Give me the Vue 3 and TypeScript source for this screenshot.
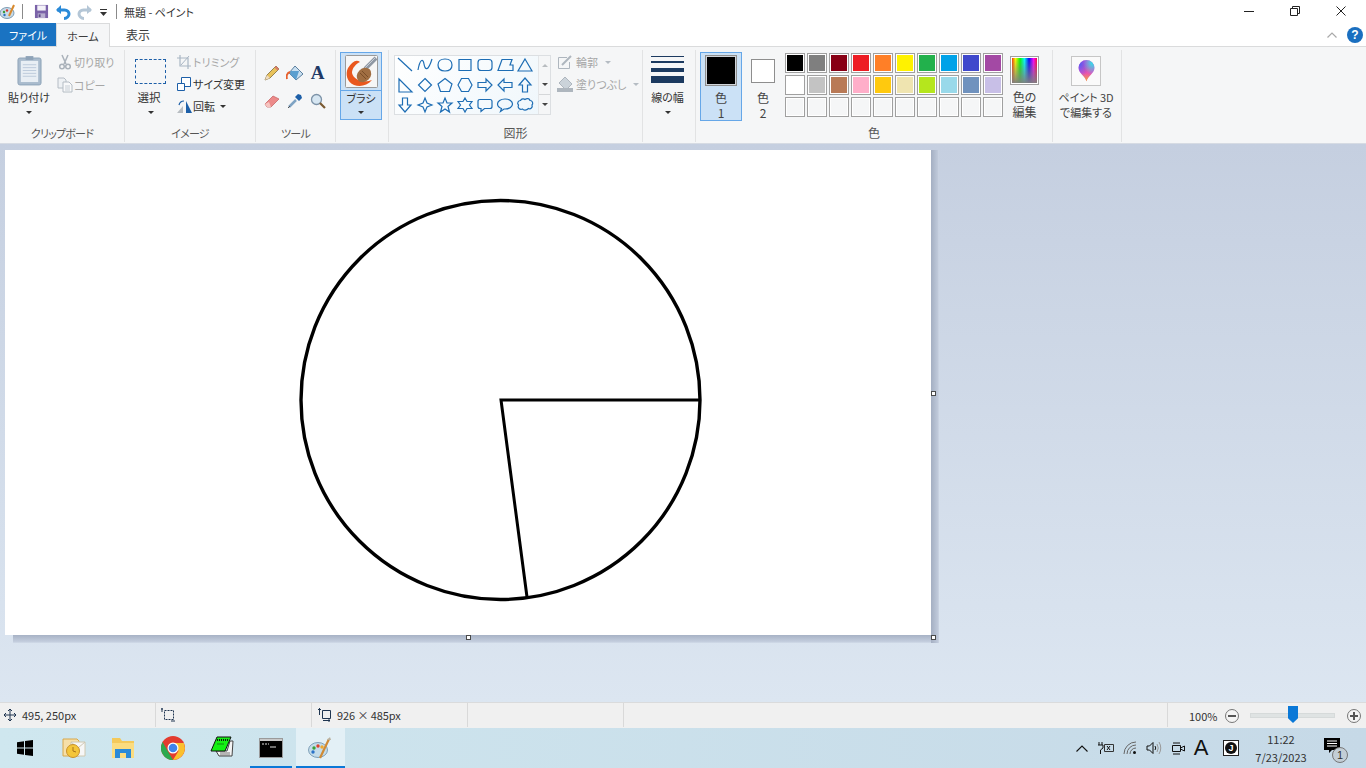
<script setup lang="ts">
// shapes gallery, row by row
const shapes: string[] = [
  'M3 3L17 16',
  'M3 15C5 4 8 3 9 9S13 17 17 4',
  'M3 10C3 6 6 4 10 4S17 6 17 10 14 16 10 16 3 14 3 10Z',
  'M4 4.500H16V15.500H4Z',
  'M6 4.500H14Q17 4.500 17 7.500V12.500Q17 15.500 14 15.500H6Q3 15.500 3 12.500V7.500Q3 4.500 6 4.500Z',
  'M7 4.500H17L15 10H18V15.500H3Z',
  'M10 4L17 16H3Z',
  'M4 4L17 17H4Z',
  'M10 3.500L16.500 10 10 16.500 3.500 10Z',
  'M10 3.500L17 9 14.500 16.500H5.500L3 9Z',
  'M6.500 3.500H13.500L17 10 13.500 16.500H6.500L3 10Z',
  'M3 7.500H11V4L17 10 11 16V12.500H3Z',
  'M17 7.500H9V4L3 10 9 16V12.500H17Z',
  'M7.500 17V10H4L10 3 16 10H12.500V17Z',
  'M7.500 3V10H4L10 17 16 10H12.500V3Z',
  'M10 3L12 8 17 10 12 12 10 17 8 12 3 10 8 8Z',
  'M10 3L12 8H17L13 11.500 14.500 17 10 14 5.500 17 7 11.500 3 8H8Z',
  'M10 3L12 6.500H17L14.500 10 17 13.500H12L10 17 8 13.500H3L5.500 10 3 6.500H8Z',
  'M5 4.500H15Q17 4.500 17 6.500V11.500Q17 13.500 15 13.500H9.500L6 16.500V13.500H5Q3 13.500 3 11.500V6.500Q3 4.500 5 4.500Z',
  'M10 4C14.500 4 17.500 6.500 17.500 9S14.500 14 10 14H9L5.500 16.500 6.500 13.500C4 12.500 2.500 11 2.500 9 2.500 6.500 5.500 4 10 4Z',
  'M5.500 5.500C6.500 3.500 9 3.500 10 4.500 12 3 14.500 3.500 15 5.500 17.500 5.500 18.500 8.500 17 10 18 12.500 15.500 14.500 13.500 13.500 11.500 15.500 8.500 15.500 7.500 14 5 15 2 13 3.500 10 1.500 8 3.500 5.500 5.500 5.500Z',
]

const colorRows: string[][] = [
  ['#000000', '#7f7f7f', '#880015', '#ed1c24', '#ff7f27', '#fff200', '#22b14c', '#00a2e8', '#3f48cc', '#a349a4'],
  ['#ffffff', '#c3c3c3', '#b97a57', '#ffaec9', '#ffc90e', '#efe4b0', '#b5e61d', '#99d9ea', '#7092be', '#c8bfe7'],
  Array(10).fill(''),
]

const statusCells = [
  { cls: 'cell-pos', text: '495, 250px', icon: 'pos' },
  { cls: 'cell-sel', text: '', icon: 'sel' },
  { cls: 'cell-size', text: '926 × 485px', icon: 'size' },
  { cls: 'cell-blank', text: '', icon: '' },
  { cls: 'cell-rest', text: '', icon: '' },
]
</script>

<template>
  <div class="paint">
    <!-- title bar -->
    <header class="titlebar">
      <svg class="qa-app" viewBox="0 0 16 16" width="16" height="16">
        <ellipse cx="7" cy="9" rx="7" ry="5.500" fill="#c7dbe8" stroke="#7f9db5" />
        <circle cx="4" cy="8" r="1.200" fill="#3a9a3a" />
        <circle cx="7" cy="6.500" r="1.200" fill="#d8352a" />
        <circle cx="4.500" cy="11" r="1.200" fill="#2a6fc0" />
        <path d="M9 12L14 1" stroke="#d88a2e" stroke-width="2" />
      </svg>
      <i class="qa-sep"></i>
      <svg class="qa-save" viewBox="0 0 16 16" width="15" height="15">
        <path d="M1 1H15V15H1Z" fill="#7a62a8" />
        <path d="M3.500 1.500H12.500V7H3.500Z" fill="#f3f1f8" />
        <path d="M4 10H12V15H4Z" fill="#b7afcf" />
        <path d="M5 11H7V14H5Z" fill="#5c4a88" />
      </svg>
      <svg class="qa-undo" viewBox="0 0 16 16" width="16" height="16">
        <path d="M2 6H9.500C12.500 6 14 8 14 10S12 14.500 9 14.500" fill="none" stroke="#2a8ad8" stroke-width="3" />
        <path d="M6 1V10L1 6Z" fill="#2a8ad8" />
      </svg>
      <svg class="qa-redo" viewBox="0 0 16 16" width="16" height="16">
        <path d="M14 6H6.500C3.500 6 2 8 2 10S4 14.500 7 14.500" fill="none" stroke="#b4c6d6" stroke-width="3" />
        <path d="M10 1V10L15 6Z" fill="#b4c6d6" />
      </svg>
      <svg class="qa-drop" viewBox="0 0 8 8" width="8" height="8">
        <path d="M0 1H7V2H0ZM0 4H7L3.500 8Z" fill="#333" />
      </svg>
      <i class="qa-sep second"></i>
      <span class="title-text">無題 - ペイント</span>
      <div class="win-controls">
        <svg viewBox="0 0 10 10" width="10" height="10"><path d="M0 5.500H10" stroke="#222" /></svg>
        <svg viewBox="0 0 10 10" width="10" height="10"><path d="M.5 2.500H7.500V9.500H.5ZM2.500 2.500V.5H9.500V7.500H7.500" fill="none" stroke="#222" /></svg>
        <svg viewBox="0 0 10 10" width="10" height="10"><path d="M.5 .5L9.500 9.500M9.500 .5L.5 9.500" stroke="#222" /></svg>
      </div>
    </header>

    <!-- tabs -->
    <nav class="tabs">
      <span class="tab file">ファイル</span>
      <span class="tab home">ホーム</span>
      <span class="tab view">表示</span>
      <div class="tabs-right">
        <svg viewBox="0 0 10 6" width="10" height="6"><path d="M.5 5.500L5 1 9.500 5.500" fill="none" stroke="#a9a9a9" stroke-width="1.200" /></svg>
        <span class="help">?</span>
      </div>
    </nav>

    <!-- ribbon -->
    <section class="ribbon">
      <div class="group g-clip">
        <div class="group-body">
          <div class="big-btn paste">
            <svg viewBox="0 0 26 32" width="25" height="31">
              <rect x="1" y="3" width="24" height="28" rx="2" fill="#a9bbcd" stroke="#8ea3b8" />
              <rect x="4" y="6" width="18" height="22" fill="#e8eef4" />
              <path d="M6 10H20M6 13H20M6 16H20M6 19H20M6 22H20" stroke="#bccadb" />
              <rect x="9" y="1" width="8" height="4" fill="#8ea3b8" />
            </svg>
            <span class="big-label">貼り付け</span>
            <i class="caret"></i>
          </div>
          <div class="small-col clip-col">
            <div class="small-row off">
              <svg viewBox="0 0 16 16" width="16" height="16"><path d="M5 1L9 10M11 1L7 10" stroke="#aab2ba" stroke-width="1.500" /><circle cx="5" cy="12.500" r="2.300" fill="none" stroke="#aab2ba" stroke-width="1.500" /><circle cx="11" cy="12.500" r="2.300" fill="none" stroke="#aab2ba" stroke-width="1.500" /></svg>
              <span>切り取り</span>
            </div>
            <div class="small-row off">
              <svg viewBox="0 0 16 16" width="16" height="16"><path d="M1 1H7L9 3V11H1Z" fill="#eef1f4" stroke="#b4bcc4" /><path d="M6 5H12L15 8V15H6Z" fill="#f8f9fa" stroke="#b4bcc4" /><path d="M8 9H13M8 11H13M8 13H13" stroke="#c6cdd4" /></svg>
              <span>コピー</span>
            </div>
          </div>
        </div>
        <div class="group-label">クリップボード</div>
      </div>

      <div class="group g-image">
        <div class="group-body">
          <div class="big-btn select">
            <i class="dash-box"></i>
            <span class="big-label">選択</span>
            <i class="caret"></i>
          </div>
          <div class="small-col tight">
            <div class="small-row off">
              <svg viewBox="0 0 16 16" width="16" height="16"><path d="M4 1V12H15M1 4H12V15" fill="none" stroke="#a9b6c4" stroke-width="1.200" /><path d="M5 11L13 2" stroke="#a9b6c4" /></svg>
              <span>トリミング</span>
            </div>
            <div class="small-row">
              <svg viewBox="0 0 16 16" width="16" height="16"><path d="M5.500 1.500H14.500V10.500H5.500Z" fill="#fff" stroke="#1d5fa8" /><path d="M1.500 7.500H8.500V14.500H1.500Z" fill="#fff" stroke="#1d5fa8" /></svg>
              <span>サイズ変更</span>
            </div>
            <div class="small-row">
              <svg viewBox="0 0 16 16" width="16" height="16"><path d="M1 15L7 8V15Z" fill="#b8bdc2" /><path d="M10 3V15H16Z" fill="#1d5fa8" /><path d="M3 7Q4 3 8 3" fill="none" stroke="#1d5fa8" stroke-width="1.200" /></svg>
              <span>回転</span>
              <i class="caret inline"></i>
            </div>
          </div>
        </div>
        <div class="group-label">イメージ</div>
      </div>

      <div class="group g-tools">
        <div class="group-body tool-grid">
          <svg viewBox="0 0 16 16" width="16" height="16"><path d="M1 15L3 10 12 1 15 4 6 13Z" fill="#e8c25a" stroke="#7d6b3a" stroke-width=".8" /><path d="M1 15L3 10 6 13Z" fill="#f0dcc0" /><path d="M12 1L15 4 13.500 5.500 10.500 2.500Z" fill="#d87a6a" /></svg>
          <svg viewBox="0 0 18 16" width="18" height="16"><path d="M9 1L17 9 10 15 3 8Z" fill="#c9dff0" stroke="#5a7f9f" /><path d="M5 6L13 6 10 15 3 8Z" fill="#5a9fd0" /><path d="M4 7C1 8 0 11 1 14" fill="none" stroke="#e8602c" stroke-width="2" /></svg>
          <span class="tool-a">A</span>
          <svg viewBox="0 0 16 16" width="16" height="16"><path d="M1 11L9 3 15 6 7 14 3 14Z" fill="#ec8a8a" stroke="#c86a6a" stroke-width=".8" /><path d="M1 11L3 14 7 14 5 9Z" fill="#f6c4c0" /></svg>
          <svg viewBox="0 0 16 16" width="16" height="16"><path d="M2 14L9 7" stroke="#7fa4c4" stroke-width="2.500" /><path d="M8 4L12 8 15 5 14 2 11 1Z" fill="#1d5fa8" /><path d="M1 15L3 13" stroke="#555" /></svg>
          <svg viewBox="0 0 16 16" width="16" height="16"><circle cx="6.500" cy="6.500" r="5" fill="#d6e6f2" stroke="#7d93a8" stroke-width="1.300" /><path d="M10 10L15 15" stroke="#7a5a32" stroke-width="2.200" /></svg>
        </div>
        <div class="group-label">ツール</div>
      </div>

      <div class="group g-brush">
        <div class="group-body">
          <div class="brush-btn">
            <div class="brush-top">
              <svg viewBox="0 0 33 33" width="33" height="33">
                <rect x=".5" y=".5" width="32" height="32" rx="1" fill="#f6f6f6" stroke="#9a9a9a" />
                <path d="M31 3L20 14" stroke="#8f98a4" stroke-width="4" />
                <path d="M30 3L20 13" stroke="#c9ced6" />
                <path d="M15 7C11 4 7 7 3 13 0 19 2 27 9 30 15 32 22 31 27 25 20 28 9 26 7 18 7 13 11 9 15 7Z" fill="#e9571d" />
                <ellipse cx="19" cy="20" rx="8" ry="6.500" transform="rotate(-45 19 20)" fill="#a06e42" />
                <path d="M15 18L21 24M17 16L23 22" stroke="#7a4e28" />
              </svg>
            </div>
            <span class="brush-label">ブラシ</span>
            <i class="caret"></i>
          </div>
        </div>
      </div>

      <div class="group g-shapes">
        <div class="group-body">
          <div class="gallery">
            <div class="gallery-items">
              <svg v-for="(d, i) in shapes" :key="i" viewBox="0 0 20 20" width="20" height="20">
                <path :d="d" fill="none" stroke="#1d6db4" stroke-width="1.200" />
              </svg>
            </div>
            <div class="gallery-arrows">
              <span><i class="arrow up"></i></span>
              <span><i class="arrow"></i></span>
              <span class="more"><i class="arrow"></i></span>
            </div>
          </div>
          <div class="small-col shape-opts">
            <div class="small-row off">
              <svg viewBox="0 0 16 16" width="16" height="16"><path d="M1.500 3.500H10M1.500 3.500V14.500H12.500V8" fill="none" stroke="#aeb6be" /><path d="M5 11L14 2" stroke="#aeb6be" stroke-width="2" /></svg>
              <span>輪郭</span>
              <i class="caret inline light"></i>
            </div>
            <div class="small-row off">
              <svg viewBox="0 0 16 16" width="16" height="16"><path d="M8 1L15 8 9 14 2 7Z" fill="#cbd3da" stroke="#aeb6be" /><path d="M0 12H16V16H0Z" fill="#aeb6be" /></svg>
              <span>塗りつぶし</span>
              <i class="caret inline light"></i>
            </div>
          </div>
        </div>
        <div class="group-label plain">図形</div>
      </div>

      <div class="group g-size">
        <div class="group-body">
          <div class="big-btn size-btn">
            <div class="size-lines">
              <i class="l1"></i><i class="l2"></i><i class="l3"></i><i class="l4"></i>
            </div>
            <span class="big-label">線の幅</span>
            <i class="caret"></i>
          </div>
        </div>
      </div>

      <div class="group g-colors">
        <div class="group-body">
          <div class="color-btn active">
            <i class="chip big"><b></b></i>
            <span>色</span>
            <span>1</span>
          </div>
          <div class="color-btn second">
            <i class="chip"><b class="white"></b></i>
            <span>色</span>
            <span>2</span>
          </div>
          <div class="palette">
            <template v-for="(row, r) in colorRows" :key="r">
              <i v-for="(c, n) in row" :key="n" class="swatch" :style="{ background: c || undefined }"></i>
            </template>
          </div>
          <div class="edit-colors">
            <i class="rainbow"></i>
            <span>色の</span>
            <span>編集</span>
          </div>
        </div>
        <div class="group-label plain">色</div>
      </div>

      <div class="group g-3d">
        <div class="group-body">
          <div class="edit-3d">
            <div class="logo-box">
              <svg viewBox="0 0 24 28" width="19" height="24">
                <defs>
                  <radialGradient id="d3-base" cx=".5" cy=".5" r=".7">
                    <stop offset="0" stop-color="#f04fa8" />
                    <stop offset="1" stop-color="#d84ae0" />
                  </radialGradient>
                  <radialGradient id="d3-left" cx=".1" cy=".2" r=".6">
                    <stop offset="0" stop-color="#5a5cf0" />
                    <stop offset="1" stop-color="#5a5cf0" stop-opacity="0" />
                  </radialGradient>
                  <radialGradient id="d3-right" cx=".85" cy=".15" r=".55">
                    <stop offset="0" stop-color="#30e0e8" />
                    <stop offset="1" stop-color="#30e0e8" stop-opacity="0" />
                  </radialGradient>
                  <linearGradient id="d3-tip" x1="0" y1="0" x2="0" y2="1">
                    <stop offset=".6" stop-color="#f7a02a" stop-opacity="0" />
                    <stop offset="1" stop-color="#f7b02a" />
                  </linearGradient>
                </defs>
                <path d="M12 27C10 20 2 17 2 10A10 10 0 0 1 22 10C22 17 14 20 12 27Z" fill="url(#d3-base)" />
                <path d="M12 27C10 20 2 17 2 10A10 10 0 0 1 22 10C22 17 14 20 12 27Z" fill="url(#d3-left)" />
                <path d="M12 27C10 20 2 17 2 10A10 10 0 0 1 22 10C22 17 14 20 12 27Z" fill="url(#d3-right)" />
                <path d="M12 27C10 20 2 17 2 10A10 10 0 0 1 22 10C22 17 14 20 12 27Z" fill="url(#d3-tip)" />
              </svg>
            </div>
            <span>ペイント 3D</span>
            <span>で編集する</span>
          </div>
        </div>
      </div>
    </section>

    <!-- workspace -->
    <main class="workspace">
      <div class="canvas">
        <svg class="drawing" viewBox="0 0 926 485" width="926" height="485">
          <circle cx="495.500" cy="250" r="199.500" fill="none" stroke="#000" stroke-width="3.400" />
          <path d="M696 250H496L522 447" fill="none" stroke="#000" stroke-width="3" />
        </svg>
        <i class="handle right"></i>
        <i class="handle bottom"></i>
        <i class="handle corner"></i>
      </div>
    </main>

    <!-- status bar -->
    <footer class="statusbar">
      <div v-for="c in statusCells" :key="c.cls" class="status-cell" :class="c.cls">
        <svg v-if="c.icon === 'pos'" viewBox="0 0 12 12" width="12" height="12"><path d="M6 0V12M0 6H12M4 2L6 0 8 2M4 10L6 12 8 10M2 4L0 6 2 8M10 4L12 6 10 8" fill="none" stroke="#1f3550" /></svg>
        <svg v-if="c.icon === 'sel'" viewBox="0 0 14 14" width="14" height="14"><path d="M3.500 2.500H12.500V11.500H3.500Z" fill="none" stroke="#1f3550" stroke-dasharray="2 1" /><path d="M1 0V4M0 1H2M10 13H14" stroke="#1f3550" /></svg>
        <svg v-if="c.icon === 'size'" viewBox="0 0 14 14" width="14" height="14"><path d="M4.500 2.500H12.500V10.500H4.500Z" fill="none" stroke="#1f3550" /><path d="M1.500 0V7M0 1.500H3M5 12.500H12M11 11V14" fill="none" stroke="#1f3550" /></svg>
        <span v-if="c.text">{{ c.text }}</span>
      </div>
      <div class="zoom-area">
        <span class="zoom-val">100%</span>
        <i class="zoom-btn minus"></i>
        <div class="zoom-track"><i class="zoom-thumb"></i></div>
        <i class="zoom-btn plus"></i>
      </div>
    </footer>

    <!-- taskbar -->
    <div class="taskbar">
      <div class="task-item start">
        <svg viewBox="0 0 16 16" width="16" height="16"><path d="M0 2.200L7 1.200V7.500H0ZM8 1L16 0V7.500H8ZM0 8.500H7V14.800L0 13.800ZM8 8.500H16V16L8 15Z" fill="#000" /></svg>
      </div>
      <div class="task-item">
        <svg viewBox="0 0 24 24" width="24" height="24"><path d="M1 3H15L17 5V20H1Z" fill="#f6dfa8" stroke="#d8a84a" /><path d="M9 6H23V20H9Z" fill="#f7f7f7" stroke="#d0c8b0" /><path d="M9 6L16 12 23 6" fill="none" stroke="#cfc8b4" /><circle cx="11" cy="15" r="6.500" fill="#f4c63a" stroke="#c8912a" /><path d="M11 11V15L14 16" fill="none" stroke="#a8741c" /></svg>
      </div>
      <div class="task-item">
        <svg viewBox="0 0 24 22" width="24" height="22"><path d="M1 1H9L11 4H23V21H1Z" fill="#f4c95a" /><path d="M1 6H23V21H1Z" fill="#fbdc7f" /><path d="M4 12H20V21H15V16H9V21H4Z" fill="#2a8ad8" /></svg>
      </div>
      <div class="task-item">
        <svg viewBox="0 0 24 24" width="24" height="24"><circle cx="12" cy="12" r="12" fill="#e33b2e" /><path d="M12 24A12 12 0 0 1 1.600 6L7 15.500 12 24Z" fill="#2da94f" /><path d="M12 24L17.500 15 12 7H22.800A12 12 0 0 1 12 24Z" fill="#fbc02d" /><circle cx="12" cy="12" r="5.500" fill="#fff" /><circle cx="12" cy="12" r="4.300" fill="#3f83ea" /></svg>
      </div>
      <div class="task-item">
        <svg viewBox="0 0 24 24" width="24" height="24"><path d="M6 15L9 20H22L23 5 20 5 17 15Z" fill="#f4f4f4" stroke="#444" /><path d="M7 1H21L15 15H1Z" fill="#14f014" stroke="#111" /><path d="M7 4H18" stroke="#111" stroke-dasharray="1 1" stroke-width="2" /><path d="M7 8H14" stroke="#118811" /><path d="M10 17H20M10 19H20" stroke="#777" /></svg>
      </div>
      <div class="task-item running">
        <svg viewBox="0 0 24 20" width="24" height="20"><rect x=".5" y=".5" width="23" height="19" fill="#000" stroke="#9a9a9a" /><path d="M1 1H23V3H1Z" fill="#c8c8c8" /><path d="M3 6H5M6 6H8M9 6H10M11 9H17" stroke="#ddd" /></svg>
      </div>
      <div class="task-item running current">
        <svg viewBox="0 0 24 24" width="24" height="24"><ellipse cx="10" cy="14" rx="9.500" ry="7.500" fill="#c4dcea" stroke="#7fa0b8" /><circle cx="6" cy="12" r="1.700" fill="#3aa03a" /><circle cx="10" cy="10" r="1.700" fill="#e0402c" /><circle cx="5" cy="16" r="1.700" fill="#2a72c8" /><circle cx="14" cy="11" r="1.700" fill="#f0a82c" /><path d="M12 22L21 3" stroke="#d08a34" stroke-width="2.200" /><path d="M19 4L22 1 23 4Z" fill="#b8b0a0" /></svg>
      </div>

      <div class="tray">
        <svg viewBox="0 0 12 7" width="12" height="7"><path d="M.5 6.500L6 1 11.500 6.500" fill="none" stroke="#111" stroke-width="1.100" /></svg>
        <svg viewBox="0 0 16 12" width="16" height="12"><path d="M6.500 2.500H15.500V9.500H6.500Z" fill="none" stroke="#333" /><path d="M9 4L12 8M12 4L9 8" stroke="#111" /><path d="M1 0V3M4 0V3M0 3H5V6L2.500 8V12" fill="none" stroke="#111" /></svg>
        <svg viewBox="0 0 16 14" width="16" height="14"><path d="M1 13A12 12 0 0 1 13 1M4 13A9 9 0 0 1 13 4M7 13A6 6 0 0 1 13 7" fill="none" stroke="#666" /><circle cx="11.500" cy="11.500" r="1.500" fill="#111" /></svg>
        <svg viewBox="0 0 16 14" width="16" height="14"><path d="M1 5H3.500L7 1.500V12.500L3.500 9H1Z" fill="none" stroke="#111" /><path d="M9 5Q10.500 7 9 9" fill="none" stroke="#111" /><path d="M11 3Q13.500 7 11 11M13 1Q16.500 7 13 13" fill="none" stroke="#999" /></svg>
        <svg viewBox="0 0 14 16" width="14" height="16"><path d="M1.500 5.500H9.500V11.500H1.500Z" fill="none" stroke="#111" /><path d="M9.500 8L13.500 6V11L9.500 9M2 3H9M2 14H9" fill="none" stroke="#111" /></svg>
        <span class="tray-a">A</span>
        <span class="tray-j"><b>J</b></span>
        <div class="clock"><span>11:22</span><span>7/23/2023</span></div>
        <div class="notify">
          <svg viewBox="0 0 16 16" width="16" height="16"><path d="M0 0H16V12H8L5 15V12H0Z" fill="#000" /><path d="M3 3H13M3 5.500H13M3 8H13" stroke="#fff" /></svg>
          <span class="notify-count">1</span>
        </div>
      </div>
    </div>
  </div>
</template>

<style scoped>
.paint {
  width: 1366px;
  height: 768px;
  display: flex;
  flex-direction: column;
  font-family: "Noto Sans CJK JP", "Noto Sans", sans-serif;
  font-feature-settings: "palt";
  font-size: 11px;
  color: #3c3c3c;
  background: #fff;
  overflow: hidden;
}

/* title bar */
.titlebar {
  height: 23px;
  display: flex;
  align-items: center;
  flex: none;
  background: #fff;
}
.qa-app { margin-right: 6px; }
.qa-sep { width: 1px; height: 15px; background: #8a8a8a; margin-right: 11px; }
.qa-sep.second { margin: 0 8px 0 8px; }
.qa-save { margin-right: 6px; }
.qa-undo { margin-right: 6px; }
.qa-redo { margin-right: 7px; }
.title-text { font-size: 11px; color: #333; margin-left: -1px; }
.win-controls {
  margin-left: auto;
  display: flex;
  gap: 36px;
  padding: 0 20px 2px 0;
}

/* tabs */
.tabs {
  height: 23px;
  flex: none;
  display: flex;
  background: #fff;
  position: relative;
}
.tab { display: flex; align-items: center; justify-content: center; font-size: 11px; }
.tab.file { width: 56px; background: #1a73c2; color: #fff; }
.tab.home {
  width: 54px;
  background: #f5f6f7;
  border: 1px solid #dadbdc;
  border-bottom: none;
  height: 24px;
  position: relative;
  z-index: 1;
  box-sizing: border-box;
}
.tab.view { width: 56px; font-size: 12px; }
.tabs-right {
  margin-left: auto;
  display: flex;
  align-items: center;
  gap: 10px;
  padding-right: 3px;
}
.help {
  width: 16px;
  height: 16px;
  border-radius: 50%;
  background: #1a6fc0;
  color: #fff;
  font: bold 12px/16px "Liberation Sans", sans-serif;
  text-align: center;
}

/* ribbon */
.ribbon {
  height: 98px;
  flex: none;
  box-sizing: border-box;
  display: flex;
  background: #f5f6f7;
  border-top: 1px solid #dadbdc;
  border-bottom: 1px solid #d6dbe3;
  padding: 3px 0 1px;
}
.group {
  display: flex;
  flex-direction: column;
  flex: none;
  box-sizing: border-box;
  border-right: 1px solid #e2e3e4;
  position: relative;
}
.group-body { flex: 1; display: flex; min-height: 0; }
.group-label {
  height: 17px;
  line-height: 16px;
  font-size: 11px;
  letter-spacing: -.8px;
  text-align: center;
  color: #555;
  flex: none;
}
.group-label.plain { font-size: 12px; letter-spacing: 0; }
.g-clip { width: 125px; }
.g-image { width: 131px; }
.g-tools { width: 80px; }
.g-brush { width: 53px; }
.g-shapes { width: 254px; }
.g-size { width: 53px; }
.g-colors { width: 357px; }
.g-3d { width: 69px; }

.big-btn { display: flex; flex-direction: column; align-items: center; }
.big-label { font-size: 11px; line-height: 16px; color: #333; white-space: nowrap; }
.caret {
  display: block;
  width: 0;
  height: 0;
  border: 3px solid transparent;
  border-top: 3px solid #333;
  border-bottom: none;
}
.caret.inline { display: inline-block; margin-left: 4px; }
.caret.light { border-top-color: #b5bcc3; }
.big-btn .caret { margin-top: 6px; }

.paste { width: 58px; padding-top: 5px; }
.paste .big-label { margin-top: 3px; }
.select { width: 51px; padding-top: 9px; }
.select .big-label { margin: 5px 3px 0 0; font-size: 11.500px; }
.dash-box {
  display: block;
  width: 29px;
  height: 23px;
  border: 1px dashed #1d5fa8;
}
.small-col { display: flex; flex-direction: column; padding-top: 3px; gap: 5px; }
.small-col.tight { gap: 4px; }
.clip-col { margin-left: -1px; }
.small-row {
  display: flex;
  align-items: center;
  gap: 1px;
  height: 18px;
  white-space: nowrap;
  font-size: 11px;
  color: #333;
}
.small-row.off { color: #a6a6a6; }

/* tools */
.tool-grid {
  display: grid;
  grid-template-columns: repeat(3, 23px);
  grid-auto-rows: 28px;
  justify-items: center;
  align-items: center;
  align-content: start;
  padding: 9px 0 0 4px;
}
.tool-a {
  font: bold 19px/16px "Liberation Serif", serif;
  color: #1f3a66;
}

/* brush */
.g-brush .group-body { padding: 2px 0 0 4px; }
.brush-btn {
  width: 42px;
  height: 68px;
  box-sizing: border-box;
  border: 1px solid #66a7e8;
  background: #cbe1f6;
  display: flex;
  flex-direction: column;
  align-items: center;
}
.brush-top {
  width: 100%;
  height: 37px;
  display: flex;
  align-items: center;
  justify-content: center;
  border-bottom: 1px solid #66a7e8;
  flex: none;
}
.brush-label { line-height: 14px; font-size: 11px; color: #333; }
.brush-btn .caret { margin-top: 6px; }

/* shapes */
.g-shapes .group-body { padding: 5px 0 0 5px; }
.gallery {
  display: flex;
  flex: none;
  width: 157px;
  height: 60px;
  box-sizing: border-box;
  border: 1px solid #dcdfe2;
  background: linear-gradient(135deg, #fff, #eef6fb);
}
.gallery-items {
  display: grid;
  grid-template-columns: repeat(7, 20px);
  grid-auto-rows: 20px;
  width: 143px;
  margin-top: -1px;
  flex: none;
}
.gallery-items svg { display: block; }
.gallery-arrows {
  flex: 1;
  display: flex;
  flex-direction: column;
  border-left: 1px solid #e4e6e8;
  background: #f5f6f7;
}
.gallery-arrows span { flex: 1; display: flex; align-items: center; justify-content: center; }
.gallery-arrows .more { border-top: 1px solid #d5d7d9; }
.arrow {
  width: 0;
  height: 0;
  border: 3px solid transparent;
  border-top: 3px solid #444;
  border-bottom: none;
}
.arrow.up { border-top: none; border-bottom: 3px solid #b8bcc0; }
.shape-opts { padding: 0 0 0 6px; margin-top: -2px; gap: 4px; }
.shape-opts .small-row { gap: 3px; }

/* line width */
.size-btn { width: 49px; padding-top: 6px; }
.size-lines { width: 33px; display: flex; flex-direction: column; }
.size-lines i { display: block; background: #1c3a60; }
.size-lines .l1 { height: 1px; margin-bottom: 4px; }
.size-lines .l2 { height: 2px; margin-bottom: 5px; }
.size-lines .l3 { height: 4px; margin-bottom: 4px; }
.size-lines .l4 { height: 7px; }
.size-btn .big-label { margin-top: 6px; }

/* colours */
.g-colors .group-body { padding: 2px 0 0 4px; }
.color-btn {
  width: 42px;
  height: 69px;
  box-sizing: border-box;
  display: flex;
  flex-direction: column;
  align-items: center;
  font-size: 12px;
  line-height: 15px;
  color: #444;
  border: 1px solid transparent;
}
.color-btn.active { background: #cbe1f6; border-color: #66a7e8; }
.color-btn.second { width: 42px; padding-top: 6px; }
.chip {
  display: block;
  width: 24px;
  height: 24px;
  box-sizing: border-box;
  border: 1px solid #8e8e8e;
  margin-bottom: 7px;
}
.chip.big {
  width: 32px;
  height: 32px;
  padding: 1px;
  margin: 2px 0 4px;
  background: #cfd4da;
}
.chip b { display: block; width: 100%; height: 100%; background: #000; }
.chip b.white { background: #fff; }
.palette {
  display: grid;
  grid-template-columns: repeat(10, 20px);
  grid-auto-rows: 20px;
  gap: 2px;
  margin: 1px 0 0 1px;
  align-content: start;
}
.swatch {
  display: block;
  box-sizing: border-box;
  border: 1px solid #a0a0a0;
  box-shadow: inset 0 0 0 1px #fff;
  background: transparent;
}
.edit-colors {
  display: flex;
  flex-direction: column;
  align-items: center;
  margin-left: 7px;
  width: 29px;
  padding-top: 4px;
  font-size: 12px;
  line-height: 15px;
  color: #444;
  white-space: nowrap;
}
.rainbow {
  display: block;
  width: 29px;
  height: 29px;
  box-sizing: border-box;
  border: 1px solid #a0a0a0;
  box-shadow: inset 0 0 0 1px #fff;
  margin-bottom: 4px;
  background:
    linear-gradient(to bottom, rgba(128, 128, 128, 0), #7f7f7f),
    linear-gradient(to right, #f00, #ff0, #0f0, #0ff, #00f, #f0f, #f00);
}

/* paint 3d */
.edit-3d {
  width: 66px;
  display: flex;
  flex-direction: column;
  align-items: center;
  padding-top: 6px;
  font-size: 11px;
  line-height: 15px;
  color: #444;
  white-space: nowrap;
}
.logo-box {
  width: 30px;
  height: 30px;
  box-sizing: border-box;
  border: 1px solid #c6c6c6;
  background: #fafafa;
  display: flex;
  align-items: center;
  justify-content: center;
  margin-bottom: 4px;
}

/* workspace */
.workspace {
  flex: 1;
  min-height: 0;
  padding: 6px 0 0 5px;
  background: linear-gradient(to bottom, #c5cfe0, #dce6f1);
}
.canvas {
  width: 926px;
  height: 485px;
  background: #fff;
  position: relative;
}
.canvas::before,
.canvas::after {
  content: "";
  position: absolute;
}
.canvas::before {
  left: 100%;
  top: 0;
  width: 8px;
  height: 493px;
  background: linear-gradient(to right, #a4afc2, #bfc9da 85%, #cdd6e5);
}
.canvas::after {
  top: 100%;
  left: 8px;
  width: 918px;
  height: 8px;
  background: linear-gradient(to bottom, #a7b2c5, #c4cede 85%, #d3dcea);
}
.drawing { display: block; }
.handle {
  position: absolute;
  z-index: 1;
  width: 5px;
  height: 5px;
  box-sizing: border-box;
  background: #fff;
  border: 1px solid #4a4a4a;
}
.handle.right { left: 926px; top: 241px; }
.handle.bottom { left: 461px; top: 485px; }
.handle.corner { left: 926px; top: 485px; }

/* status bar */
.statusbar {
  height: 26px;
  flex: none;
  display: flex;
  background: #f0f0f0;
  border-top: 1px solid #dadbdc;
  box-sizing: border-box;
}
.status-cell {
  display: flex;
  align-items: center;
  gap: 6px;
  box-sizing: border-box;
  border-right: 1px solid #d9d9d9;
  padding-left: 4px;
  font-size: 11px;
  color: #333;
  margin: 0 0 1px;
  white-space: nowrap;
}
.cell-pos { width: 156px; }
.cell-sel { width: 156px; padding-left: 5px; }
.cell-size { width: 156px; padding-left: 6px; }
.cell-size span { margin-left: -1px; font-feature-settings: normal; letter-spacing: -.1px; }
.cell-blank { width: 156px; }
.cell-rest { width: 544px; }
.zoom-area {
  flex: 1;
  display: flex;
  align-items: center;
  padding-left: 21px;
  font-size: 11px;
}
.zoom-val { width: 36px; color: #333; }
.zoom-btn {
  display: block;
  position: relative;
  width: 14px;
  height: 14px;
  box-sizing: border-box;
  border: 1px solid #777;
  border-radius: 50%;
  background: #f4f4f4;
}
.zoom-btn::before,
.plus::after {
  content: "";
  position: absolute;
  background: #555;
}
.zoom-btn::before { left: 2px; right: 2px; top: 5px; height: 2px; }
.plus::after { top: 2px; bottom: 2px; left: 5px; width: 2px; }
.zoom-track {
  width: 83px;
  height: 3px;
  background: #dfe3e3;
  border: 1px solid #d6dada;
  margin: 0 12px 0 11px;
  position: relative;
}
.zoom-thumb {
  position: absolute;
  left: 37px;
  top: -8px;
  width: 10px;
  height: 17px;
  background: #0a78d7;
  clip-path: polygon(0 0, 100% 0, 100% 72%, 50% 100%, 0 72%);
}

/* taskbar */
.taskbar {
  height: 40px;
  flex: none;
  display: flex;
  background: linear-gradient(to right, #cfe7ef, #c6d9e7);
}
.task-item {
  width: 49.300px;
  height: 40px;
  flex: none;
  box-sizing: border-box;
  display: flex;
  align-items: center;
  justify-content: center;
  position: relative;
}
.task-item.running::after {
  content: "";
  position: absolute;
  left: 4px;
  right: 4px;
  bottom: 0;
  height: 2px;
  background: #0a78d7;
}
.task-item.current { background: #e3f0f6; }
.task-item.current::after { left: 0; right: 0; }
.tray {
  margin-left: auto;
  display: flex;
  align-items: center;
  padding-right: 24px;
}
/* the tray spacing is uneven in the real thing */
.tray > :nth-child(2) { margin-left: 10px; }
.tray > :nth-child(3) { margin-left: 9px; }
.tray > :nth-child(4) { margin-left: 7px; }
.tray > :nth-child(5) { margin-left: 9px; }
.tray > :nth-child(6) { margin-left: 8px; }
.tray > :nth-child(7) { margin-left: 14px; }
.tray > :nth-child(8) { margin-left: 7px; }
.tray > :nth-child(9) { margin-left: 8px; }
.tray-a { width: 16px; text-align: center; font: 22px/24px "Liberation Sans", sans-serif; color: #111; }
.tray-j {
  width: 16px;
  height: 16px;
  box-sizing: border-box;
  border: 1px solid #222;
  background: #fff;
  display: flex;
  align-items: center;
  justify-content: center;
}
.tray-j b {
  display: block;
  width: 12px;
  height: 12px;
  border-radius: 50%;
  background: #111;
  color: #fff;
  font: bold 9px/12px "Liberation Sans", sans-serif;
  text-align: center;
}
.clock {
  width: 70px;
  display: flex;
  flex-direction: column;
  align-items: center;
  font-size: 11px;
  line-height: 18px;
  color: #333;
}
.notify { position: relative; width: 18px; height: 20px; }
.notify svg { display: block; }
.notify-count {
  position: absolute;
  left: 8px;
  top: 9px;
  width: 16px;
  height: 16px;
  box-sizing: border-box;
  border: 1px solid #777;
  border-radius: 50%;
  background: #c3ced6;
  font: 11px/14px "Liberation Sans", sans-serif;
  text-align: center;
  color: #333;
}
</style>

<style>
html, body { margin: 0; overflow: hidden; }
</style>
